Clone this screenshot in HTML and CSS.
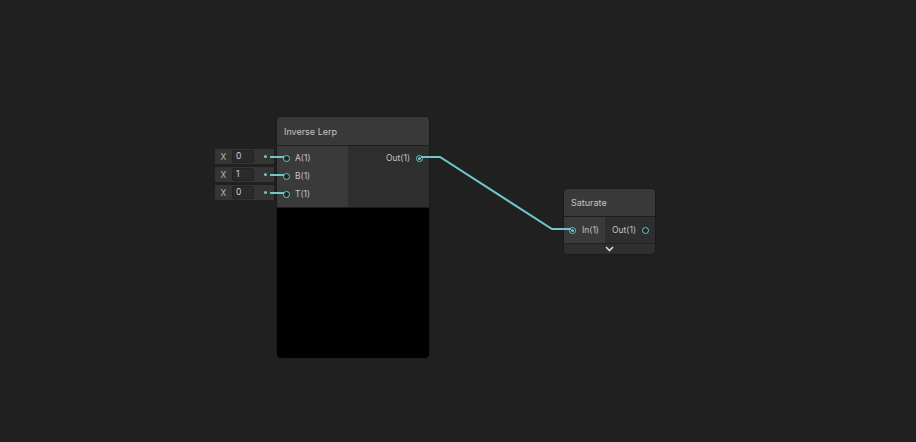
FILE: index.html
```html
<!DOCTYPE html>
<html>
<head>
<meta charset="utf-8">
<link rel="stylesheet" href="styles.css">
</head>
<body>
<div class="canvas">
  <svg class="wires" width="916" height="442" viewBox="0 0 916 442">
    <path d="M 421 157 L 440 157 L 552 229 L 571 229" fill="none" stroke="#6ec8cb" stroke-width="2"/>
  </svg>

  <div class="inline-fields">
    <div class="field-row">
      <div class="field"><span class="axis">X</span><span class="value">0</span></div>
      <span class="dot"></span><span class="link"></span>
    </div>
    <div class="field-row">
      <div class="field"><span class="axis">X</span><span class="value">1</span></div>
      <span class="dot"></span><span class="link"></span>
    </div>
    <div class="field-row">
      <div class="field"><span class="axis">X</span><span class="value">0</span></div>
      <span class="dot"></span><span class="link"></span>
    </div>
  </div>

  <div class="node lerp">
    <div class="title">Inverse Lerp</div>
    <div class="ports">
      <div class="inputs">
        <div class="port in"><span class="pin"></span><span class="label">A(1)</span></div>
        <div class="port in"><span class="pin"></span><span class="label">B(1)</span></div>
        <div class="port in"><span class="pin"></span><span class="label">T(1)</span></div>
      </div>
      <div class="outputs">
        <div class="port out"><span class="label">Out(1)</span><span class="pin connected"></span></div>
      </div>
    </div>
    <div class="preview"></div>
  </div>

  <div class="node saturate">
    <div class="title">Saturate</div>
    <div class="ports">
      <div class="inputs">
        <div class="port in"><span class="pin connected"></span><span class="label">In(1)</span></div>
      </div>
      <div class="outputs">
        <div class="port out"><span class="label">Out(1)</span><span class="pin"></span></div>
      </div>
    </div>
    <div class="collapse">
      <svg width="9" height="6" viewBox="0 0 9 6"><path d="M1 1 L4.5 4.5 L8 1" fill="none" stroke="#d8d8d8" stroke-width="1.6"/></svg>
    </div>
  </div>
</div>
</body>
</html>
```

FILE: styles.css
```css
html, body {
  margin: 0;
  padding: 0;
  background: #202020;
}
.canvas {
  position: relative;
  width: 916px;
  height: 442px;
  overflow: hidden;
  font-family: Inter, "Noto Sans", sans-serif;
  color: #c4c4c4;
}
.wires {
  position: absolute;
  left: 0;
  top: 0;
  z-index: 3;
  pointer-events: none;
}
.node {
  position: absolute;
  display: flex;
  flex-direction: column;
  border: 1px solid #1a1a1a;
  border-radius: 5px;
  overflow: hidden;
  background: #2e2e2e;
  box-sizing: border-box;
}
.title {
  background: #393939;
  font-size: 9px;
  display: flex;
  align-items: center;
  padding-left: 7px;
  border-bottom: 1px solid #1e1e1e;
  box-sizing: border-box;
}
.ports {
  display: flex;
}
.inputs {
  background: #3a3a3a;
  display: flex;
  flex-direction: column;
}
.outputs {
  flex: 1;
  background: #2e2e2e;
  display: flex;
  flex-direction: column;
  align-items: flex-end;
}
.port {
  display: flex;
  align-items: center;
  height: 18px;
  font-size: 8.5px;
}
.pin {
  width: 5px;
  height: 5px;
  border: 1.5px solid #6ec8cb;
  border-radius: 50%;
  background: #232323;
  flex: none;
  position: relative;
}
.pin.connected::after {
  content: "";
  position: absolute;
  left: 1px;
  top: 1px;
  width: 3px;
  height: 3px;
  border-radius: 50%;
  background: #6ec8cb;
}
.port.in .pin { margin-left: 6px; margin-right: 5px; }
.port.out .pin { margin-left: 6px; margin-right: 6px; }

/* Inverse Lerp */
.lerp {
  left: 276px;
  top: 116px;
  width: 154px;
  height: 243px;
}
.lerp .title { height: 29px; }
.lerp .ports { height: 61px; padding: 0; }
.lerp .inputs { width: 71px; padding-top: 3px; box-sizing: border-box; }
.lerp .outputs { padding-top: 3px; }
.preview {
  flex: 1;
  background: #000;
  border-top: 1px solid #1c1c1c;
  border-radius: 0 0 4px 4px;
}

/* Saturate */
.saturate {
  left: 563px;
  top: 188px;
  width: 93px;
  height: 67px;
}
.saturate .title { height: 28px; }
.saturate .ports { height: 26px; }
.saturate .inputs { width: 41px; justify-content: center; }
.saturate .outputs { justify-content: center; }
.saturate .port { height: 26px; }
.saturate .port.in .pin { margin-left: 5px; margin-right: 6px; }
.saturate .port.out .pin { margin-left: 6px; margin-right: 6px; }
.collapse {
  flex: 1;
  background: #2f2f2f;
  border-top: 1px solid #232323;
  display: flex;
  align-items: center;
  justify-content: center;
}

/* inline default value fields */
.inline-fields {
  position: absolute;
  left: 215px;
  top: 149px;
  display: flex;
  flex-direction: column;
  gap: 3px;
  z-index: 2;
}
.field-row {
  position: relative;
  display: flex;
  align-items: center;
  height: 15px;
}
.field {
  display: flex;
  align-items: center;
  width: 59px;
  height: 15px;
  background: #353535;
  font-size: 8.5px;
}
.axis {
  width: 17px;
  text-align: center;
  color: #b8b8b8;
}
.value {
  width: 22px;
  height: 13px;
  box-sizing: border-box;
  background: #2a2a2a;
  border: 1px solid #232323;
  border-radius: 2px;
  padding-left: 3px;
  line-height: 11px;
  color: #d0d0d0;
}
.dot {
  position: absolute;
  left: 49px;
  width: 3px;
  height: 3px;
  border-radius: 50%;
  background: #6ec8cb;
}
.link {
  position: absolute;
  left: 55px;
  width: 14px;
  height: 2px;
  background: #6ec8cb;
}
```
